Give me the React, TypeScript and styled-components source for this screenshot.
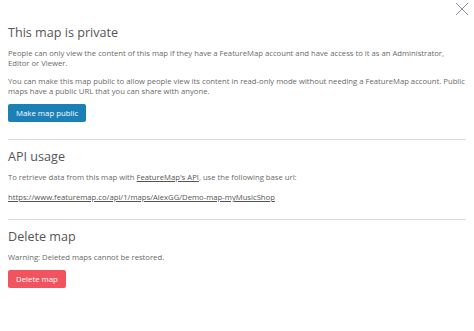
import styled, { createGlobalStyle } from "styled-components";

const GlobalStyle = createGlobalStyle`
  html, body {
    margin: 0;
    padding: 0;
    background: #fff;
  }
  body {
    font-family: "Open Sans", "Noto Sans", sans-serif;
    color: #666;
  }
`;

const Panel = styled.div`
  position: relative;
  width: 474px;
  height: 331px;
  box-sizing: border-box;
  padding: 25px 8px 0 8px;
  background: #fff;
`;

const CloseButton = styled.button`
  position: absolute;
  top: 2px;
  right: 5px;
  width: 14px;
  height: 14px;
  padding: 0;
  border: 0;
  background: none;
  cursor: pointer;
`;

const Section = styled.section<{ $divider?: boolean }>`
  border-top: ${(p) => (p.$divider ? "1px solid #dcdcdc" : "none")};
  padding-top: ${(p) => (p.$divider ? "9px" : "0")};
  padding-bottom: 17px;

  & > *:last-child {
    margin-bottom: 0;
  }
`;

const Title = styled.h2`
  margin: 0 0 7px;
  font-size: 12.6px;
  line-height: 16px;
  font-weight: 400;
  color: #555;
`;

const Text = styled.p<{ $gap?: number }>`
  margin: 0 0 ${(p) => p.$gap ?? 8}px;
  font-size: 7.7px;
  line-height: 10px;
  color: #6a6a6a;
`;

const Link = styled.a`
  color: #555;
  text-decoration: underline;
`;

const ActionButton = styled.button<{ $tone: "primary" | "danger" }>`
  display: block;
  margin-top: 1px;
  height: 18px;
  padding: 0 8px;
  border: 0;
  border-radius: 2px;
  font-family: inherit;
  font-size: 7.8px;
  color: #fff;
  background: ${(p) => (p.$tone === "primary" ? "#1b80b6" : "#f1545f")};
  cursor: pointer;
`;

export default function App() {
  return (
    <Panel>
      <GlobalStyle />
      <CloseButton aria-label="Close">
        <svg width="14" height="14" viewBox="0 0 14 14">
          <path d="M1 1 L13 13 M13 1 L1 13" stroke="#8a90a8" strokeWidth="1" fill="none" />
        </svg>
      </CloseButton>

      <Section>
        <Title>This map is private</Title>
        <Text>
          People can only view the content of this map if they have a FeatureMap account and have
          access to it as an Administrator, Editor or Viewer.
        </Text>
        <Text>
          You can make this map public to allow people view its content in read-only mode without
          needing a FeatureMap account. Public maps have a public URL that you can share with
          anyone.
        </Text>
        <ActionButton $tone="primary">Make map public</ActionButton>
      </Section>

      <Section $divider>
        <Title>API usage</Title>
        <Text $gap={10}>
          To retrieve data from this map with <Link href="#">FeatureMap's API</Link>, use the
          following base url:
        </Text>
        <Text>
          <Link href="#">https://www.featuremap.co/api/1/maps/AlexGG/Demo-map-myMusicShop</Link>
        </Text>
      </Section>

      <Section $divider>
        <Title>Delete map</Title>
        <Text>Warning: Deleted maps cannot be restored.</Text>
        <ActionButton $tone="danger">Delete map</ActionButton>
      </Section>
    </Panel>
  );
}
